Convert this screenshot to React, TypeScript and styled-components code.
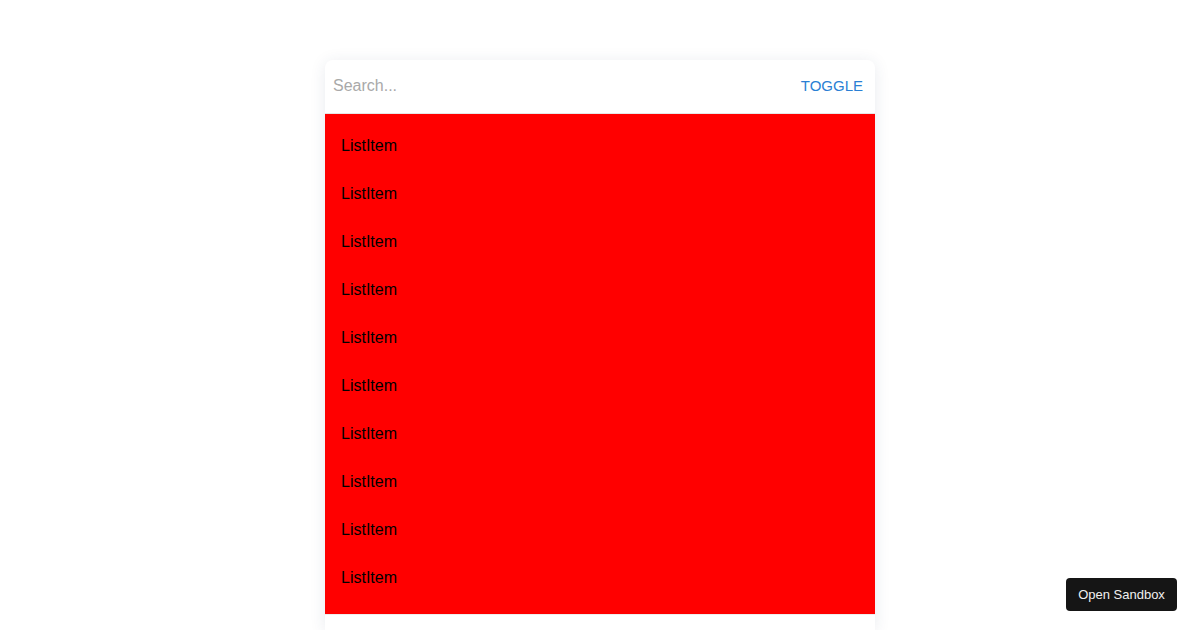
import React from 'react';
import styled, { createGlobalStyle } from 'styled-components';

const GlobalStyle = createGlobalStyle`
  html, body {
    margin: 0;
    padding: 0;
    background: #ffffff;
    font-family: "Liberation Sans", Arial, sans-serif;
    overflow: hidden;
  }
`;

const items = Array.from({ length: 10 }, (_, i) => i);

const App = () => {
  return (
    <>
      <GlobalStyle />
      <Page>
        <Card>
          <Header>
            <SearchInput placeholder="Search..." />
            <ToggleButton>TOGGLE</ToggleButton>
          </Header>
          <List>
            {items.map((i) => (
              <ListItem key={i}>ListItem</ListItem>
            ))}
          </List>
          <Footer />
        </Card>
      </Page>
      <SandboxButton>Open Sandbox</SandboxButton>
    </>
  );
};

export default App;

const Page = styled.div`
  display: flex;
  justify-content: center;
  padding-top: 60px;
  height: 630px;
  box-sizing: border-box;
`;

const Card = styled.div`
  width: 550px;
  background: #ffffff;
  border-radius: 8px 8px 0 0;
  box-shadow: 0 2px 16px rgba(40, 60, 100, 0.1);
  display: flex;
  flex-direction: column;
  overflow: hidden;
`;

const Header = styled.div`
  display: flex;
  align-items: center;
  height: 53px;
  padding: 0 12px 0 8px;
  border-bottom: 1px solid #e6e6e6;
`;

const SearchInput = styled.input`
  flex: 1;
  border: none;
  outline: none;
  font-family: "Liberation Sans", Arial, sans-serif;
  font-size: 16px;
  color: #333;
  padding: 0 0 2px;
  background: transparent;

  &::placeholder {
    color: #a9a9a9;
  }
`;

const ToggleButton = styled.button`
  border: none;
  background: transparent;
  padding: 0 0 2px;
  font-family: "Liberation Sans", Arial, sans-serif;
  font-size: 15px;
  color: #2a7fd4;
  cursor: pointer;
`;

const List = styled.ul`
  list-style: none;
  margin: 0;
  padding: 8px 0 12px;
  background: #ff0000;
`;

const ListItem = styled.li`
  height: 48px;
  display: flex;
  align-items: center;
  padding-left: 16px;
  font-size: 16px;
  color: #000;
`;

const Footer = styled.div`
  flex: 1;
  border-top: 1px solid #eeeeee;
`;

const SandboxButton = styled.div`
  position: fixed;
  right: 23px;
  bottom: 19px;
  width: 111px;
  height: 33px;
  display: flex;
  align-items: center;
  justify-content: center;
  background: #151515;
  border-radius: 4px;
  color: #f0f0f0;
  font-size: 13px;
  font-family: "Liberation Sans", Arial, sans-serif;
`;
